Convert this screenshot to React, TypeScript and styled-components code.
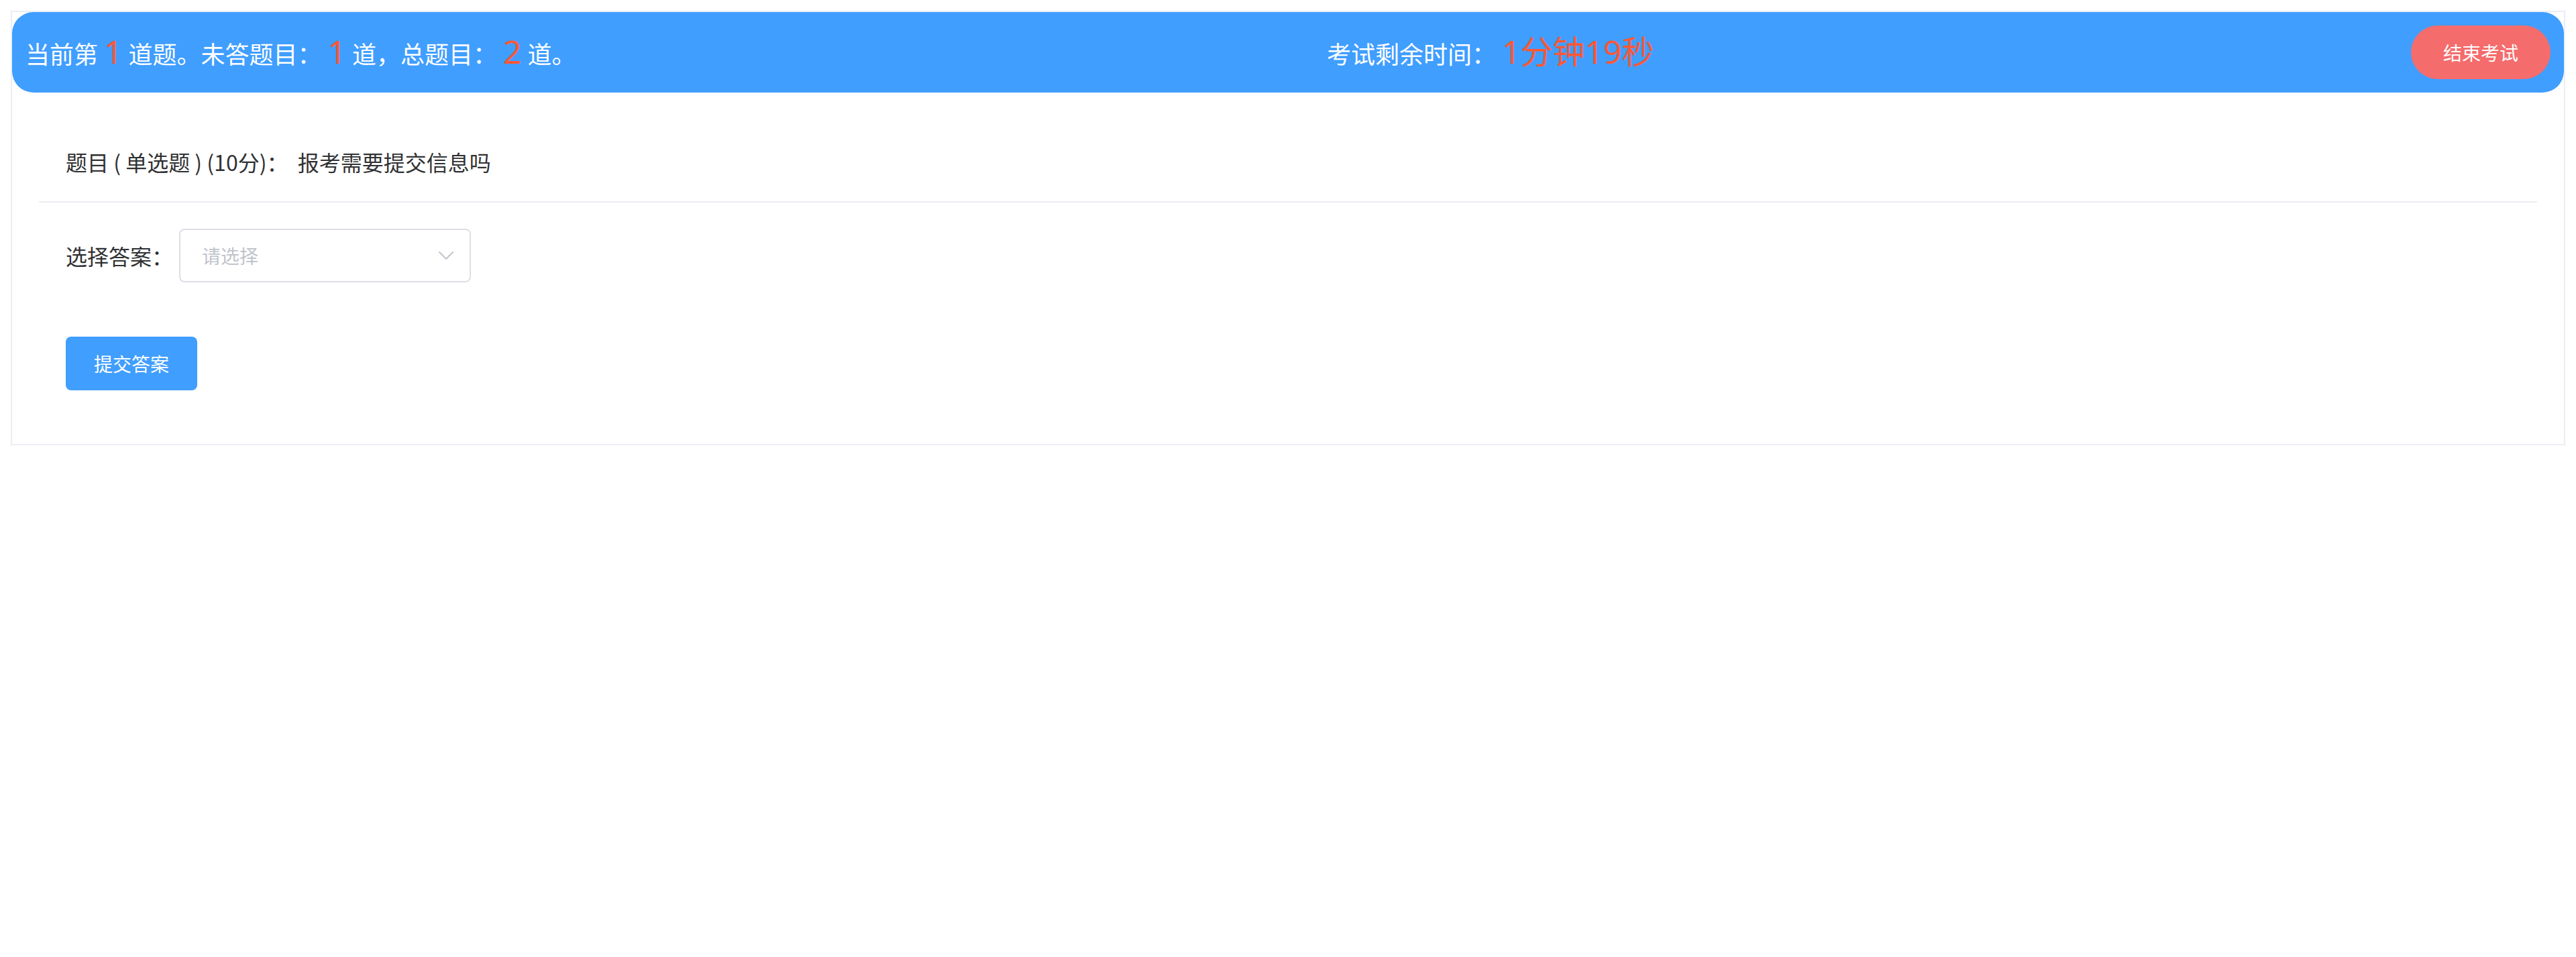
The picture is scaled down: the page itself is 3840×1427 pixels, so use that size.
import React from "react";
import styled, { createGlobalStyle } from "styled-components";

const GlobalStyle = createGlobalStyle`
  html, body {
    background: #ffffff;
  }
  body {
    margin: 16px;
    font-family: "Noto Sans CJK SC", "Noto Sans", "Liberation Sans", sans-serif;
    color: #303133;
  }
  * {
    box-sizing: border-box;
  }
`;

const Card = styled.div`
  border: 2px solid #ebeef5;
  background: #ffffff;
`;

const Banner = styled.div`
  height: 120px;
  background: #409eff;
  border-radius: 32px;
  padding: 0 20px;
  display: flex;
  align-items: center;
  justify-content: space-between;
  color: #ffffff;
`;

const BannerText = styled.div`
  font-size: 36px;
  line-height: 60px;
  white-space: pre;
  color: #ffffff;
`;

const Highlight = styled.span`
  font-family: "Noto Sans", "Noto Sans CJK SC", sans-serif;
  font-size: 48px;
  color: #ff5733;
  margin: 0 9px;
`;

const EndButton = styled.button`
  height: 80px;
  padding: 0 48px;
  border: none;
  border-radius: 40px;
  background: #f56c6c;
  color: #ffffff;
  font-family: inherit;
  font-size: 28px;
  line-height: 80px;
  cursor: pointer;
`;

const Body = styled.div`
  padding: 0 40px 80px;
`;

const QuestionHeader = styled.div`
  padding: 81px 40px 37px;
  border-bottom: 2px solid #ebeef5;
  font-size: 32px;
  line-height: 44px;
  color: #303133;
  white-space: pre;
`;

const Form = styled.div`
  padding: 39px 40px 0;
  display: flex;
  flex-direction: column;
  align-items: flex-start;
  gap: 81px;
`;

const FormRow = styled.div`
  display: flex;
  align-items: center;
`;

const Label = styled.label`
  font-size: 32px;
  line-height: 80px;
  color: #303133;
  padding-right: 9px;
`;

const SelectBox = styled.div`
  width: 435px;
  height: 80px;
  border: 2px solid #dcdfe6;
  border-radius: 8px;
  padding: 0 24px 0 32px;
  display: flex;
  align-items: center;
  justify-content: space-between;
  background: #ffffff;
  cursor: pointer;
`;

const Placeholder = styled.span`
  font-size: 28px;
  line-height: 40px;
  color: #c0c4cc;
`;

const Chevron = styled.svg`
  display: block;
  width: 22px;
  height: 12px;
`;

const SubmitButton = styled.button`
  width: 196px;
  height: 80px;
  border: none;
  border-radius: 8px;
  background: #409eff;
  color: #ffffff;
  font-family: inherit;
  font-size: 28px;
  line-height: 80px;
  padding: 0;
  cursor: pointer;
`;

export default function App() {
  const current = 1;
  const unanswered = 1;
  const total = 2;
  return (
    <>
      <GlobalStyle />
      <Card>
        <Banner>
          <BannerText>
            当前第<Highlight>{current}</Highlight>道题。未答题目：<Highlight>{unanswered}</Highlight>道，总题目：<Highlight>{total}</Highlight>道。
          </BannerText>
          <BannerText>
            考试剩余时间：<Highlight>1分钟19秒</Highlight>
          </BannerText>
          <EndButton>结束考试</EndButton>
        </Banner>
        <Body>
          <QuestionHeader>题目 ( 单选题 ) (10分)：  报考需要提交信息吗</QuestionHeader>
          <Form>
            <FormRow>
              <Label>选择答案：</Label>
              <SelectBox>
                <Placeholder>请选择</Placeholder>
                <Chevron viewBox="0 0 22 12" fill="none">
                  <polyline points="1,1 11,11 21,1" stroke="#c0c4cc" strokeWidth="2" strokeLinecap="round" strokeLinejoin="round" />
                </Chevron>
              </SelectBox>
            </FormRow>
            <SubmitButton>提交答案</SubmitButton>
          </Form>
        </Body>
      </Card>
    </>
  );
}
